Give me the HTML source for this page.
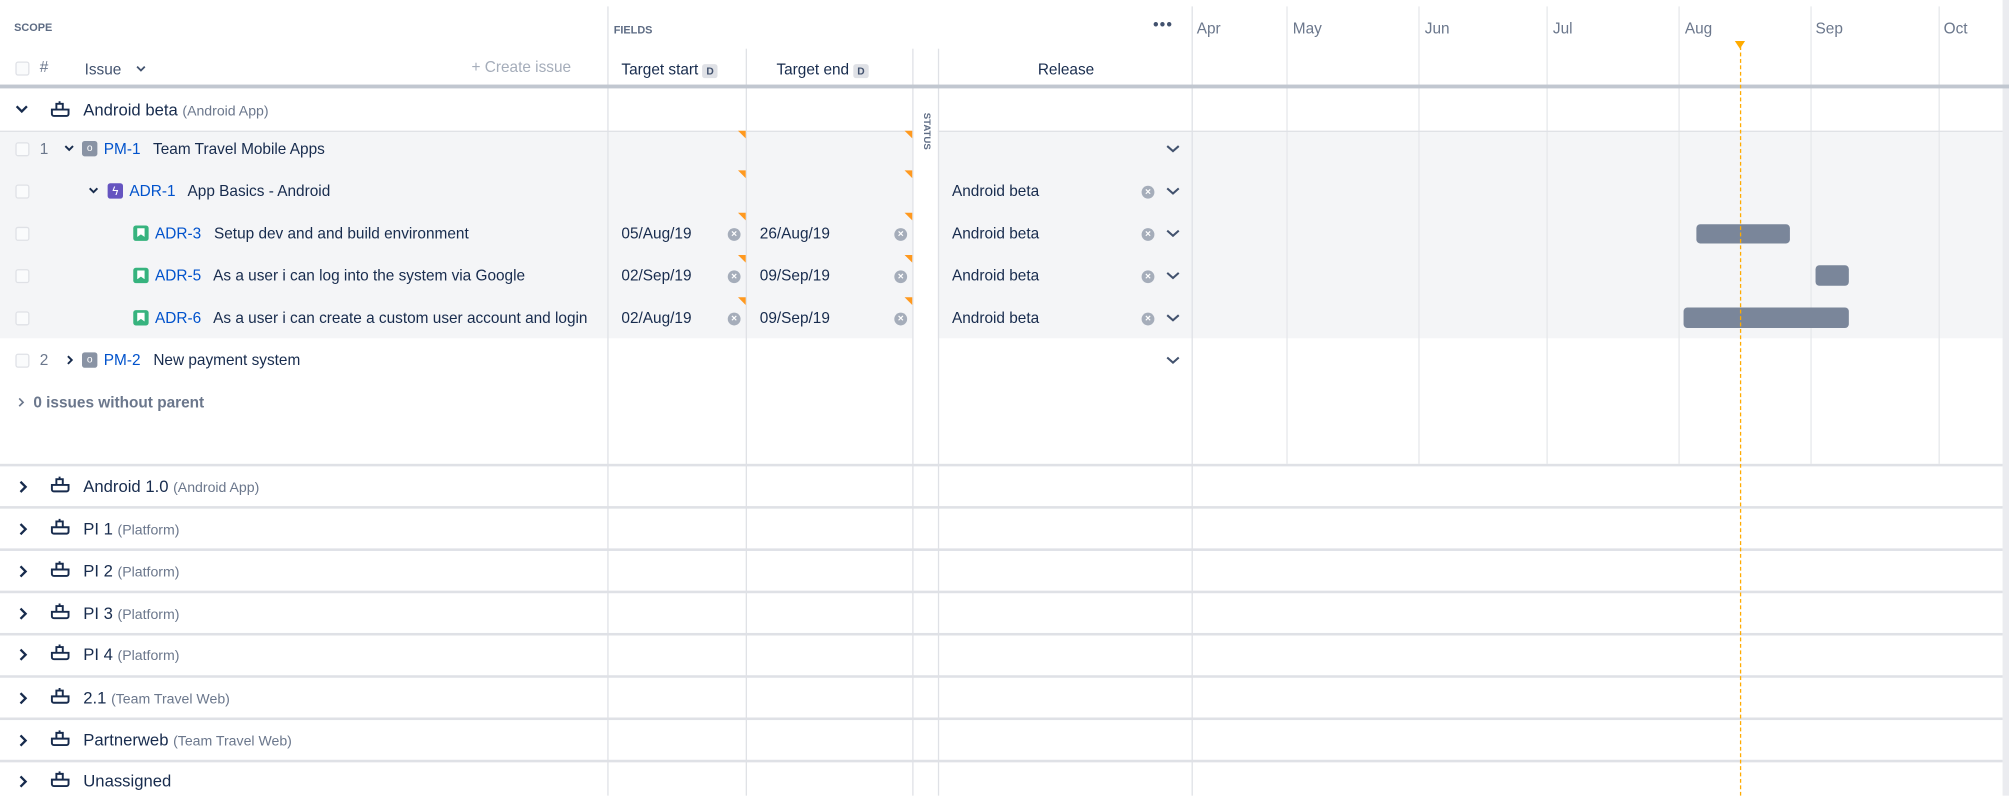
<!DOCTYPE html>
<html><head><meta charset="utf-8"><style>
*{box-sizing:border-box;margin:0;padding:0}
html,body{width:2009px;height:796px;overflow:hidden;background:#fff}
#w{position:absolute;left:0;top:0;width:1568px;height:621px;transform:scale(1.28125);transform-origin:0 0;font-family:"Liberation Sans",sans-serif;color:#172b4d;font-size:12px}
.a{position:absolute}
.t{position:absolute;white-space:nowrap;line-height:14px}
.vl{position:absolute;width:1px;background:#dfe1e6}
.hl{position:absolute;height:1px;background:#dfe1e6;left:0}
.cb{position:absolute;width:11px;height:11px;border:1px solid #dfe1e6;border-radius:2px;background:#fafbfc}
.lnk{color:#0052cc}
.g{color:#6b778c;font-size:11px}
.x{position:absolute;width:10px;height:10px;border-radius:50%;background:#a5adba;color:#fff;font-size:8px;line-height:10px;text-align:center;font-weight:bold}
.tri{position:absolute;width:0;height:0;border-top:6px solid #ff991f;border-left:6px solid transparent}
.bar{position:absolute;background:#7a869a;border-radius:3px}
.b{font-weight:bold}
</style></head><body><div id="w">
<div class="a" style="left:0;top:102px;width:712px;height:162px;background:#f4f5f7"></div>
<div class="a" style="left:732px;top:102px;width:831px;height:162px;background:#f4f5f7"></div>
<div class="a" style="left:1563px;top:0;width:5px;height:621px;background:#ebecf0"></div>
<div class="t b" style="left:11px;top:14px;font-size:8.5px;color:#5e6c84">SCOPE</div>
<div class="t b" style="left:479px;top:16px;font-size:8.5px;color:#5e6c84">FIELDS</div>
<div class="t b" style="left:900px;top:12px;font-size:12px;color:#42526e;letter-spacing:1px">•••</div>
<div class="cb" style="left:12px;top:48px"></div>
<div class="t" style="left:31px;top:45px;color:#6b778c">#</div>
<div class="t" style="left:66px;top:47px;color:#42526e">Issue</div>
<svg class="a" style="left:106px;top:51px" width="8" height="6"><path d="M1 1l3 3 3-3" fill="none" stroke="#42526e" stroke-width="1.4"/></svg>
<div class="t" style="left:368px;top:45px;color:#a5adba">+ Create issue</div>
<div class="t" style="left:485px;top:47px">Target start <span style="background:#dfe1e6;font-size:8px;padding:1px 3px;border-radius:2px;font-weight:bold;color:#42526e">D</span></div>
<div class="t" style="left:606px;top:47px">Target end <span style="background:#dfe1e6;font-size:8px;padding:1px 3px;border-radius:2px;font-weight:bold;color:#42526e">D</span></div>
<div class="t" style="left:810px;top:47px">Release</div>
<div class="t" style="left:934px;top:15px;color:#6b778c">Apr</div>
<div class="t" style="left:1009px;top:15px;color:#6b778c">May</div>
<div class="t" style="left:1112px;top:15px;color:#6b778c">Jun</div>
<div class="t" style="left:1212px;top:15px;color:#6b778c">Jul</div>
<div class="t" style="left:1315px;top:15px;color:#6b778c">Aug</div>
<div class="t" style="left:1417px;top:15px;color:#6b778c">Sep</div>
<div class="t" style="left:1517px;top:15px;color:#6b778c">Oct</div>
<div class="vl" style="left:1004px;top:5px;height:357px;background:#e6e8eb"></div>
<div class="vl" style="left:1107px;top:5px;height:357px;background:#e6e8eb"></div>
<div class="vl" style="left:1207px;top:5px;height:357px;background:#e6e8eb"></div>
<div class="vl" style="left:1310px;top:5px;height:357px;background:#e6e8eb"></div>
<div class="vl" style="left:1413px;top:5px;height:357px;background:#e6e8eb"></div>
<div class="vl" style="left:1513px;top:5px;height:357px;background:#e6e8eb"></div>
<div class="vl" style="left:474px;top:5px;height:616px"></div>
<div class="vl" style="left:582px;top:38px;height:583px"></div>
<div class="vl" style="left:712px;top:38px;height:583px"></div>
<div class="vl" style="left:732px;top:38px;height:583px"></div>
<div class="vl" style="left:930px;top:5px;height:616px"></div>
<div class="a" style="left:0;top:66px;width:1568px;height:3px;background:#c1c7d0"></div>
<div class="t b" style="left:716px;top:88px;font-size:7.5px;color:#5e6c84;writing-mode:vertical-rl">STATUS</div>
<div class="hl" style="top:102px;width:712px"></div><div class="hl" style="top:102px;left:732px;width:831px"></div>
<div class="hl" style="top:362px;width:1563px;height:2px"></div>
<div class="hl" style="top:395px;width:1563px;height:2px"></div>
<div class="hl" style="top:428px;width:1563px;height:2px"></div>
<div class="hl" style="top:461px;width:1563px;height:2px"></div>
<div class="hl" style="top:494px;width:1563px;height:2px"></div>
<div class="hl" style="top:527px;width:1563px;height:2px"></div>
<div class="hl" style="top:560px;width:1563px;height:2px"></div>
<div class="hl" style="top:593px;width:1563px;height:2px"></div>
<!-- chevrons (scope) -->
<svg class="a" style="left:0;top:0" width="120" height="621"><g fill="none" stroke="#172b4d" stroke-width="1.8">
<path d="M13 83l4 4 4-4"/>
<path d="M51 114l3 3 3-3" stroke-width="1.5"/>
<path d="M70 147l3 3 3-3" stroke-width="1.5"/>
<path d="M53 278l3 3-3 3" stroke-width="1.5"/>
<path d="M15 311l3 3-3 3" stroke="#6b778c" stroke-width="1.3"/>
<path d="M16 376l4 4-4 4"/><path d="M16 409l4 4-4 4"/><path d="M16 442l4 4-4 4"/><path d="M16 475l4 4-4 4"/>
<path d="M16 507l4 4-4 4"/><path d="M16 541l4 4-4 4"/><path d="M16 574l4 4-4 4"/><path d="M16 606l4 4-4 4"/>
</g>
<g fill="none" stroke="#172b4d" stroke-width="1.5">
<g transform="translate(39,79)"><path d="M5 6V2h5v4 M1.5 6.5h13v3.5c0 .8-.6 1.5-1.5 1.5H3c-.9 0-1.5-.7-1.5-1.5z M7.5 0v2"/></g>
<g transform="translate(39,372)"><path d="M5 6V2h5v4 M1.5 6.5h13v3.5c0 .8-.6 1.5-1.5 1.5H3c-.9 0-1.5-.7-1.5-1.5z M7.5 0v2"/></g>
<g transform="translate(39,405)"><path d="M5 6V2h5v4 M1.5 6.5h13v3.5c0 .8-.6 1.5-1.5 1.5H3c-.9 0-1.5-.7-1.5-1.5z M7.5 0v2"/></g>
<g transform="translate(39,438)"><path d="M5 6V2h5v4 M1.5 6.5h13v3.5c0 .8-.6 1.5-1.5 1.5H3c-.9 0-1.5-.7-1.5-1.5z M7.5 0v2"/></g>
<g transform="translate(39,471)"><path d="M5 6V2h5v4 M1.5 6.5h13v3.5c0 .8-.6 1.5-1.5 1.5H3c-.9 0-1.5-.7-1.5-1.5z M7.5 0v2"/></g>
<g transform="translate(39,503)"><path d="M5 6V2h5v4 M1.5 6.5h13v3.5c0 .8-.6 1.5-1.5 1.5H3c-.9 0-1.5-.7-1.5-1.5z M7.5 0v2"/></g>
<g transform="translate(39,537)"><path d="M5 6V2h5v4 M1.5 6.5h13v3.5c0 .8-.6 1.5-1.5 1.5H3c-.9 0-1.5-.7-1.5-1.5z M7.5 0v2"/></g>
<g transform="translate(39,570)"><path d="M5 6V2h5v4 M1.5 6.5h13v3.5c0 .8-.6 1.5-1.5 1.5H3c-.9 0-1.5-.7-1.5-1.5z M7.5 0v2"/></g>
<g transform="translate(39,602)"><path d="M5 6V2h5v4 M1.5 6.5h13v3.5c0 .8-.6 1.5-1.5 1.5H3c-.9 0-1.5-.7-1.5-1.5z M7.5 0v2"/></g>
</g></svg>
<div class="t" style="left:65px;top:79px;font-size:13px">Android beta <span class="g">(Android App)</span></div>
<div class="cb" style="left:12px;top:111px"></div><div class="t" style="left:31px;top:109px;color:#6b778c">1</div>
<div class="a" style="left:64px;top:110px;width:12px;height:12px;background:#8993a4;border-radius:2px;color:#fff;font-size:8px;text-align:center;line-height:12px">o</div>
<div class="t" style="left:81px;top:109px"><span class="lnk">PM-1</span>&nbsp;&nbsp; Team Travel Mobile Apps</div>
<div class="cb" style="left:12px;top:144px"></div>
<div class="a" style="left:84px;top:143px;width:12px;height:12px;background:#6554c0;border-radius:2px;color:#fff;font-size:9px;text-align:center;line-height:12px">ϟ</div>
<div class="t" style="left:101px;top:142px"><span class="lnk">ADR-1</span>&nbsp;&nbsp; App Basics - Android</div>
<div class="cb" style="left:12px;top:177px"></div>
<div class="a" style="left:104px;top:176px;width:12px;height:12px;background:#36b37e;border-radius:2px"><div class="a" style="left:3px;top:2px;width:6px;height:7px;background:#fff;clip-path:polygon(0 0,100% 0,100% 100%,50% 70%,0 100%)"></div></div>
<div class="t" style="left:121px;top:175px"><span class="lnk">ADR-3</span>&nbsp;&nbsp; Setup dev and and build environment</div>
<div class="cb" style="left:12px;top:210px"></div>
<div class="a" style="left:104px;top:209px;width:12px;height:12px;background:#36b37e;border-radius:2px"><div class="a" style="left:3px;top:2px;width:6px;height:7px;background:#fff;clip-path:polygon(0 0,100% 0,100% 100%,50% 70%,0 100%)"></div></div>
<div class="t" style="left:121px;top:208px"><span class="lnk">ADR-5</span>&nbsp;&nbsp; As a user i can log into the system via Google</div>
<div class="cb" style="left:12px;top:243px"></div>
<div class="a" style="left:104px;top:242px;width:12px;height:12px;background:#36b37e;border-radius:2px"><div class="a" style="left:3px;top:2px;width:6px;height:7px;background:#fff;clip-path:polygon(0 0,100% 0,100% 100%,50% 70%,0 100%)"></div></div>
<div class="t" style="left:121px;top:241px"><span class="lnk">ADR-6</span>&nbsp;&nbsp; As a user i can create a custom user account and login</div>
<div class="cb" style="left:12px;top:276px"></div><div class="t" style="left:31px;top:274px;color:#6b778c">2</div>
<div class="a" style="left:64px;top:275px;width:12px;height:12px;background:#8993a4;border-radius:2px;color:#fff;font-size:8px;text-align:center;line-height:12px">o</div>
<div class="t" style="left:81px;top:274px"><span class="lnk">PM-2</span>&nbsp;&nbsp; New payment system</div>
<div class="t b" style="left:26px;top:307px;color:#6b778c;font-size:12px">0 issues without parent</div>
<div class="tri" style="left:576px;top:102px"></div><div class="tri" style="left:706px;top:102px"></div>
<div class="tri" style="left:576px;top:133px"></div><div class="tri" style="left:706px;top:133px"></div>
<div class="tri" style="left:576px;top:166px"></div><div class="tri" style="left:706px;top:166px"></div>
<div class="tri" style="left:576px;top:199px"></div><div class="tri" style="left:706px;top:199px"></div>
<div class="tri" style="left:576px;top:232px"></div><div class="tri" style="left:706px;top:232px"></div>
<div class="t" style="left:485px;top:175px">05/Aug/19</div><div class="x" style="left:568px;top:178px">×</div>
<div class="t" style="left:593px;top:175px">26/Aug/19</div><div class="x" style="left:698px;top:178px">×</div>
<div class="t" style="left:485px;top:208px">02/Sep/19</div><div class="x" style="left:568px;top:211px">×</div>
<div class="t" style="left:593px;top:208px">09/Sep/19</div><div class="x" style="left:698px;top:211px">×</div>
<div class="t" style="left:485px;top:241px">02/Aug/19</div><div class="x" style="left:568px;top:244px">×</div>
<div class="t" style="left:593px;top:241px">09/Sep/19</div><div class="x" style="left:698px;top:244px">×</div>
<div class="t" style="left:743px;top:142px">Android beta</div><div class="x" style="left:891px;top:145px">×</div>
<div class="t" style="left:743px;top:175px">Android beta</div><div class="x" style="left:891px;top:178px">×</div>
<div class="t" style="left:743px;top:208px">Android beta</div><div class="x" style="left:891px;top:211px">×</div>
<div class="t" style="left:743px;top:241px">Android beta</div><div class="x" style="left:891px;top:244px">×</div>
<svg class="a" style="left:910px;top:112px" width="11" height="180"><g fill="none" stroke="#42526e" stroke-width="1.6"><path d="M1 2l4.5 4 4.5-4"/><path d="M1 35l4.5 4 4.5-4"/><path d="M1 68l4.5 4 4.5-4"/><path d="M1 101l4.5 4 4.5-4"/><path d="M1 134l4.5 4 4.5-4"/><path d="M1 167l4.5 4 4.5-4"/></g></svg>
<div class="bar" style="left:1324px;top:175px;width:73px;height:15px"></div>
<div class="bar" style="left:1417px;top:207px;width:26px;height:16px"></div>
<div class="bar" style="left:1314px;top:240px;width:129px;height:16px"></div>
<div class="a" style="left:1358px;top:36px;width:0;height:585px;border-left:1px dashed #ffab00"></div>
<div class="a" style="left:1354px;top:32px;width:0;height:0;border-left:4px solid transparent;border-right:4px solid transparent;border-top:6px solid #ffab00"></div>
<div class="t" style="left:65px;top:373px;font-size:13px">Android 1.0 <span class="g">(Android App)</span></div>
<div class="t" style="left:65px;top:406px;font-size:13px">PI 1 <span class="g">(Platform)</span></div>
<div class="t" style="left:65px;top:439px;font-size:13px">PI 2 <span class="g">(Platform)</span></div>
<div class="t" style="left:65px;top:472px;font-size:13px">PI 3 <span class="g">(Platform)</span></div>
<div class="t" style="left:65px;top:504px;font-size:13px">PI 4 <span class="g">(Platform)</span></div>
<div class="t" style="left:65px;top:538px;font-size:13px">2.1 <span class="g">(Team Travel Web)</span></div>
<div class="t" style="left:65px;top:571px;font-size:13px">Partnerweb <span class="g">(Team Travel Web)</span></div>
<div class="t" style="left:65px;top:603px;font-size:13px">Unassigned</div>
</div></body></html>
